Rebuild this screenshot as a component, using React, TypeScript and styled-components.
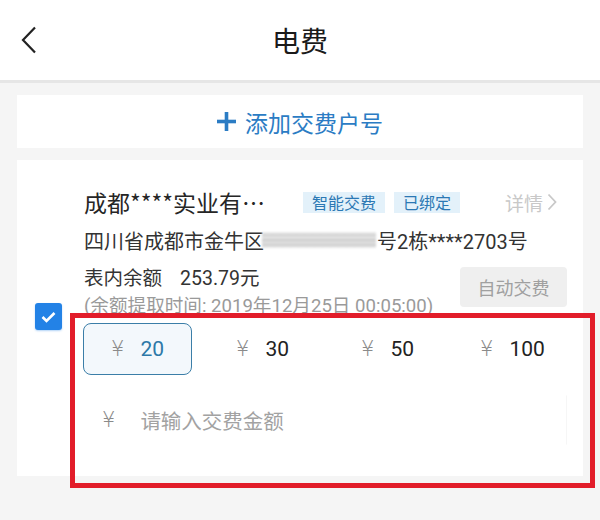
import React from "react";
import styled, { createGlobalStyle } from "styled-components";

const FONT = `Roboto, "Noto Sans CJK SC", "Noto Sans", sans-serif`;

const Global = createGlobalStyle`
  html, body { margin: 0; padding: 0; }
  body {
    background: #f5f5f5;
    font-family: ${FONT};
    width: 600px;
    height: 520px;
    overflow: hidden;
  }
`;

const Page = styled.div`
  width: 600px;
  height: 520px;
  background: #f5f5f5;
  display: flex;
  flex-direction: column;
`;

const Header = styled.header`
  height: 80px;
  background: #fff;
  border-bottom: 3px solid #e6e6e6;
  display: grid;
  grid-template-columns: 80px 1fr 80px;
  align-items: center;
  flex: none;
`;

const BackBtn = styled.div`
  padding-left: 21px;
  display: flex;
  align-items: center;
`;

const Title = styled.h1`
  margin: 0;
  text-align: center;
  font-size: 28px;
  font-weight: 400;
  color: #1a1a1a;
  font-family: "Noto Sans CJK SC", sans-serif;
`;

const Main = styled.main`
  padding: 12px 17px 0;
  display: flex;
  flex-direction: column;
  gap: 12px;
`;

const AddButton = styled.div`
  height: 53px;
  background: #fff;
  display: flex;
  align-items: center;
  justify-content: center;
  gap: 9px;
  color: #2b7cc4;
  font-size: 23px;
  font-family: "Noto Sans CJK SC", sans-serif;
`;

const Card = styled.section`
  position: relative;
  background: #fff;
  display: grid;
  grid-template-columns: 67px 1fr;
  padding-bottom: 31px;
`;

const CheckCol = styled.div`
  padding: 143px 0 0 18px;
`;

const CheckBox = styled.div`
  width: 27px;
  height: 27px;
  border-radius: 3px;
  background: #2382e6;
  display: flex;
  align-items: center;
  justify-content: center;
  box-shadow: 0 1px 2px rgba(35, 130, 230, 0.35);
`;

const Content = styled.div`
  padding: 27px 16px 0 0;
  display: flex;
  flex-direction: column;
`;

const TitleRow = styled.div`
  height: 30px;
  display: flex;
  align-items: center;
`;

const Name = styled.div`
  flex: 0 0 219px;
  font-size: 23px;
  color: #262626;
  font-family: "Noto Sans CJK SC", sans-serif;
  white-space: nowrap;
`;

const Tag = styled.span`
  height: 21px;
  padding: 0 9px;
  margin-right: 9px;
  background: #e3f1fa;
  color: #2b78b4;
  font-size: 16px;
  line-height: 21px;
  font-family: "Noto Sans CJK SC", sans-serif;
`;

const Detail = styled.div`
  margin-left: auto;
  margin-right: 10px;
  display: flex;
  align-items: center;
  gap: 4px;
  color: #c8c8c8;
  font-size: 19px;
  font-family: "Noto Sans CJK SC", sans-serif;
`;

const AddressRow = styled.div`
  margin-top: 10px;
  height: 26px;
  display: flex;
  align-items: center;
  font-size: 20px;
  color: #333;
  white-space: nowrap;
`;

const Blur = styled.span`
  display: inline-block;
  width: 114px;
  height: 16px;
  margin: 0 1px 0 -2px;
  background: linear-gradient(
    to bottom,
    #f2f2f2 0%,
    #cfcfcf 20%,
    #e9e9e9 35%,
    #c9c9c9 50%,
    #e4e4e4 65%,
    #cdcdcd 80%,
    #f0f0f0 100%
  );
  filter: blur(0.8px);
`;

const BalanceBlock = styled.div`
  margin-top: 10px;
  display: flex;
  align-items: flex-start;
`;

const BalanceTexts = styled.div`
  display: flex;
  flex-direction: column;
`;

const BalanceLine = styled.div`
  height: 26px;
  display: flex;
  align-items: center;
  font-size: 19.5px;
  color: #333;
`;

const BalanceValue = styled.span`
  margin-left: 18px;
`;

const TimeLine = styled.div`
  margin-top: 2px;
  height: 24px;
  display: flex;
  align-items: center;
  font-size: 18.6px;
  color: #9a9a9a;
  white-space: nowrap;
`;

const AutoButton = styled.div`
  margin: 4px 0 0 auto;
  width: 107px;
  height: 40px;
  border-radius: 4px;
  background: #efefef;
  color: #a0a0a0;
  font-size: 18px;
  display: flex;
  align-items: center;
  justify-content: center;
  font-family: "Noto Sans CJK SC", sans-serif;
`;

const AmountRow = styled.div`
  margin: 8px 0 0 -1px;
  display: grid;
  grid-template-columns: repeat(4, 109px);
  gap: 16px;
`;

const AmountCell = styled.div<{ $active?: boolean }>`
  height: 52px;
  box-sizing: border-box;
  border-radius: 8px;
  border: ${(p) => (p.$active ? "1.5px solid #3b7ea8" : "1px solid transparent")};
  background: ${(p) => (p.$active ? "#f3f8fc" : "#fff")};
  display: flex;
  align-items: center;
  justify-content: center;
  gap: 16px;
`;

const Yen = styled.span`
  font-size: 21px;
  color: #8a8a8a;
  font-family: "DejaVu Sans", sans-serif;
  font-weight: 200;
`;

const Amount = styled.span<{ $active?: boolean }>`
  font-size: 21px;
  color: ${(p) => (p.$active ? "#2d79a8" : "#222")};
`;

const InputRow = styled.div`
  margin: 20px 0 0 -1px;
  height: 50px;
  box-sizing: border-box;
  border: 1px solid transparent;
  border-right-color: #f6f6f6;
  display: flex;
  align-items: center;
  padding-left: 18px;
  gap: 25px;
`;

const Placeholder = styled.span`
  font-size: 20.5px;
  color: #a2a2a2;
  font-family: "Noto Sans CJK SC", sans-serif;
`;

const Highlight = styled.div`
  position: absolute;
  left: 53px;
  top: 153px;
  width: 525px;
  height: 175px;
  box-sizing: border-box;
  border: 5px solid #e21d2a;
  pointer-events: none;
`;

const amounts = [20, 30, 50, 100];

export default function App() {
  return (
    <>
      <Global />
      <Page>
        <Header>
          <BackBtn>
            <svg width="16" height="28" viewBox="0 0 16 28">
              <polyline
                points="14,1.5 2,14 14,26.5"
                fill="none"
                stroke="#222"
                strokeWidth="2.2"
                strokeLinejoin="miter"
              />
            </svg>
          </BackBtn>
          <Title>电费</Title>
          <div />
        </Header>
        <Main>
          <AddButton>
            <svg width="19" height="19" viewBox="0 0 19 19">
              <rect x="7.7" y="0" width="3.6" height="19" fill="#2b7cc4" />
              <rect x="0" y="7.7" width="19" height="3.6" fill="#2b7cc4" />
            </svg>
            <span>添加交费户号</span>
          </AddButton>
          <Card>
            <CheckCol>
              <CheckBox>
                <svg width="15" height="12" viewBox="0 0 15 12">
                  <polyline
                    points="1.5,6 5.5,10 13.5,2"
                    fill="none"
                    stroke="#fff"
                    strokeWidth="2.6"
                  />
                </svg>
              </CheckBox>
            </CheckCol>
            <Content>
              <TitleRow>
                <Name>成都****实业有…</Name>
                <Tag>智能交费</Tag>
                <Tag>已绑定</Tag>
                <Detail>
                  <span>详情</span>
                  <svg width="10" height="18" viewBox="0 0 10 18">
                    <polyline
                      points="1.5,1.5 8.5,9 1.5,16.5"
                      fill="none"
                      stroke="#c8c8c8"
                      strokeWidth="1.8"
                    />
                  </svg>
                </Detail>
              </TitleRow>
              <AddressRow>
                <span>四川省成都市金牛区</span>
                <Blur />
                <span>号2栋****2703号</span>
              </AddressRow>
              <BalanceBlock>
                <BalanceTexts>
                  <BalanceLine>
                    <span>表内余额</span>
                    <BalanceValue>253.79元</BalanceValue>
                  </BalanceLine>
                  <TimeLine>(余额提取时间: 2019年12月25日 00:05:00)</TimeLine>
                </BalanceTexts>
                <AutoButton>自动交费</AutoButton>
              </BalanceBlock>
              <AmountRow>
                {amounts.map((a, i) => (
                  <AmountCell key={a} $active={i === 0}>
                    <Yen>¥</Yen>
                    <Amount $active={i === 0}>{a}</Amount>
                  </AmountCell>
                ))}
              </AmountRow>
              <InputRow>
                <Yen>¥</Yen>
                <Placeholder>请输入交费金额</Placeholder>
              </InputRow>
            </Content>
            <Highlight />
          </Card>
        </Main>
      </Page>
    </>
  );
}
